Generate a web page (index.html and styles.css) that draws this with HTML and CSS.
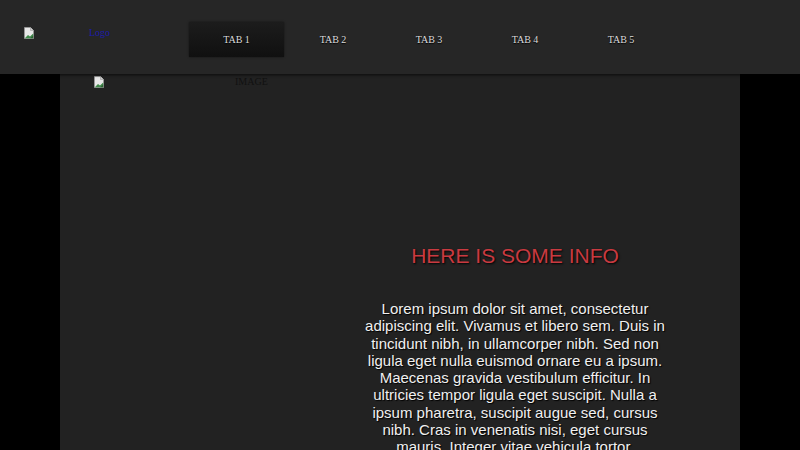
FILE: index.html
```html
<!DOCTYPE html>
<html>
<head>
<meta charset="utf-8">
<link rel="stylesheet" href="styles.css">
</head>
<body>
<header class="header">
  <a class="logo" href="#">
    <svg class="broken" viewBox="0 0 10 12" width="10" height="12">
      <path d="M0.5 0.5 H6.5 L9.5 3.5 V11.5 H0.5 Z" fill="#e8e8e8" stroke="#9a9a9a" stroke-width="0.8"/>
      <path d="M6.5 0.5 V3.5 H9.5" fill="#cfcfcf" stroke="#9a9a9a" stroke-width="0.6"/>
      <path d="M0.8 11.2 L4 8 L6 9.5 L9.2 6.5 V11.2 Z" fill="#3f8a4a"/>
      <path d="M6.2 11.2 L9.2 8.4 V11.2 Z" fill="#2c5f34"/>
    </svg>
    <span class="logo-text">Logo</span>
  </a>
  <nav class="tabs">
    <a class="tab active" href="#">TAB 1</a>
    <a class="tab" href="#">TAB 2</a>
    <a class="tab" href="#">TAB 3</a>
    <a class="tab" href="#">TAB 4</a>
    <a class="tab" href="#">TAB 5</a>
  </nav>
</header>
<main class="main">
  <div class="image-col">
    <div class="image-box">
      <svg class="broken" viewBox="0 0 10 12" width="10" height="12">
        <path d="M0.5 0.5 H6.5 L9.5 3.5 V11.5 H0.5 Z" fill="#e8e8e8" stroke="#9a9a9a" stroke-width="0.8"/>
        <path d="M6.5 0.5 V3.5 H9.5" fill="#cfcfcf" stroke="#9a9a9a" stroke-width="0.6"/>
        <path d="M0.8 11.2 L4 8 L6 9.5 L9.2 6.5 V11.2 Z" fill="#3f8a4a"/>
        <path d="M6.2 11.2 L9.2 8.4 V11.2 Z" fill="#2c5f34"/>
      </svg>
      <span class="image-text">IMAGE</span>
    </div>
  </div>
  <section class="info">
    <h1 class="info-title">HERE IS SOME INFO</h1>
    <p class="info-text">Lorem ipsum dolor sit amet, consectetur adipiscing elit. Vivamus et libero sem. Duis in tincidunt nibh, in ullamcorper nibh. Sed non ligula eget nulla euismod ornare eu a ipsum. Maecenas gravida vestibulum efficitur. In ultricies tempor ligula eget suscipit. Nulla a ipsum pharetra, suscipit augue sed, cursus nibh. Cras in venenatis nisi, eget cursus mauris. Integer vitae vehicula tortor.</p>
  </section>
</main>
</body>
</html>
```

FILE: styles.css
```css
html, body {
  margin: 0;
  padding: 0;
  background: #000;
  height: 100%;
  overflow: hidden;
}

.header {
  position: relative;
  z-index: 2;
  height: 74px;
  background: #262626;
  box-shadow: 0 1px 3px rgba(0, 0, 0, 0.7);
  display: flex;
  align-items: flex-start;
  font-family: "Liberation Serif", serif;
  font-size: 10px;
}

.logo {
  display: flex;
  align-items: flex-start;
  width: 150px;
  margin: 27px 0 0 24px;
  text-decoration: none;
}

.broken {
  display: block;
  flex: none;
}

.logo-text {
  color: #1c1ca8;
  margin-left: 55px;
  line-height: 11px;
}

.tabs {
  display: flex;
  margin: 22px 0 0 15px;
}

.tab {
  width: 96px;
  height: 35px;
  display: flex;
  align-items: center;
  justify-content: center;
  color: #dcdcdc;
  text-decoration: none;
  text-shadow: 0 1px 1px #000;
}

.tab.active {
  width: 95px;
  margin-right: 1px;
  background: linear-gradient(#1c1c1c, #101010);
  box-shadow: 0 0 2px rgba(0, 0, 0, 0.5);
}

.main {
  width: 680px;
  margin: 0 auto;
  background: #222;
  height: calc(100% - 74px);
  display: flex;
  font-family: "Liberation Sans", Arial, sans-serif;
}

.image-col {
  width: 246px;
  padding-left: 34px;
  flex: none;
}

.image-box {
  display: flex;
  align-items: flex-start;
  margin-top: 2px;
  font-family: "Liberation Serif", serif;
  font-size: 10px;
}

.image-text {
  color: #111;
  margin-left: 131px;
  line-height: 11px;
}

.info {
  width: 350px;
  display: flex;
  flex-direction: column;
  align-items: center;
  padding-top: 170px;
}

.info-title {
  margin: 0;
  font-size: 21px;
  font-weight: normal;
  color: #c93a40;
  text-shadow: 1px 1px 2px #000;
  line-height: 24px;
}

.info-text {
  width: 315px;
  margin: 32px 0 0;
  font-size: 15px;
  line-height: 17.25px;
  color: #f0f0f0;
  text-align: center;
  text-shadow: 1px 1px 1px #000;
}
```
